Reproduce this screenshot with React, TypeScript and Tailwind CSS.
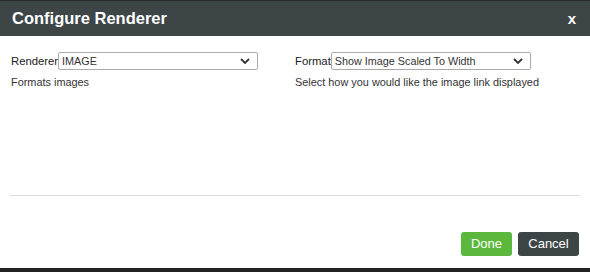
import React from 'react';

function Chevron() {
  return (
    <svg width="10" height="6" viewBox="0 0 10 6" className="shrink-0">
      <path d="M1 1l4 4 4-4" fill="none" stroke="#333" strokeWidth="1.8" />
    </svg>
  );
}

function FakeSelect({ value, width }: { value: string; width: string }) {
  return (
    <div
      className={`${width} h-[18px] flex items-center justify-between border border-[#aaa] rounded-[2px] bg-white pl-[3px] pr-[7px]`}
    >
      <span className="text-[10.8px] text-[#333] leading-none">{value}</span>
      <Chevron />
    </div>
  );
}

export default function App() {
  return (
    <div className="w-[590px] h-[272px] flex flex-col bg-white font-['Liberation_Sans',Arial,sans-serif] overflow-hidden">
      {/* Header */}
      <div className="h-[1px] bg-[#2a2a2a]" />
      <div className="h-[35px] bg-[#3d4547] flex items-center justify-between pl-[12px] pr-[14px]">
        <h2 className="text-white font-bold text-[16.5px]">Configure Renderer</h2>
        <span className="text-white font-bold text-[15px] leading-none">x</span>
      </div>

      {/* Body */}
      <div className="flex-1 px-[10px] pt-[16px]">
        <div className="grid grid-cols-2">
          <div className="pl-[1px]">
            <div className="flex items-center">
              <span className="text-[11.3px] text-[#222]">Renderer</span>
              <FakeSelect value="IMAGE" width="w-[200px]" />
            </div>
            <p className="text-[10.9px] text-[#333] mt-[4px]">Formats images</p>
          </div>
          <div className="pl-[-1px]">
            <div className="flex items-center">
              <span className="text-[11.3px] text-[#222]">Format</span>
              <FakeSelect value="Show Image Scaled To Width" width="w-[200px]" />
            </div>
            <p className="text-[10.9px] text-[#333] mt-[4px]">Select how you would like the image link displayed</p>
          </div>
        </div>
      </div>

      <div className="mx-[10px] h-[1px] bg-[#dcdcdc]" />

      {/* Footer */}
      <div className="h-[72px] flex items-end justify-end gap-[6px] pl-[10px] pr-[11px] pb-[12px]">
        <button className="h-[24px] w-[51px] rounded-[3px] bg-[#5bb83d] text-white text-[13px]">Done</button>
        <button className="h-[24px] w-[61px] rounded-[3px] bg-[#3d4547] text-white text-[13px]">Cancel</button>
      </div>
      <div className="h-[4px] bg-[#222]" />
    </div>
  );
}
